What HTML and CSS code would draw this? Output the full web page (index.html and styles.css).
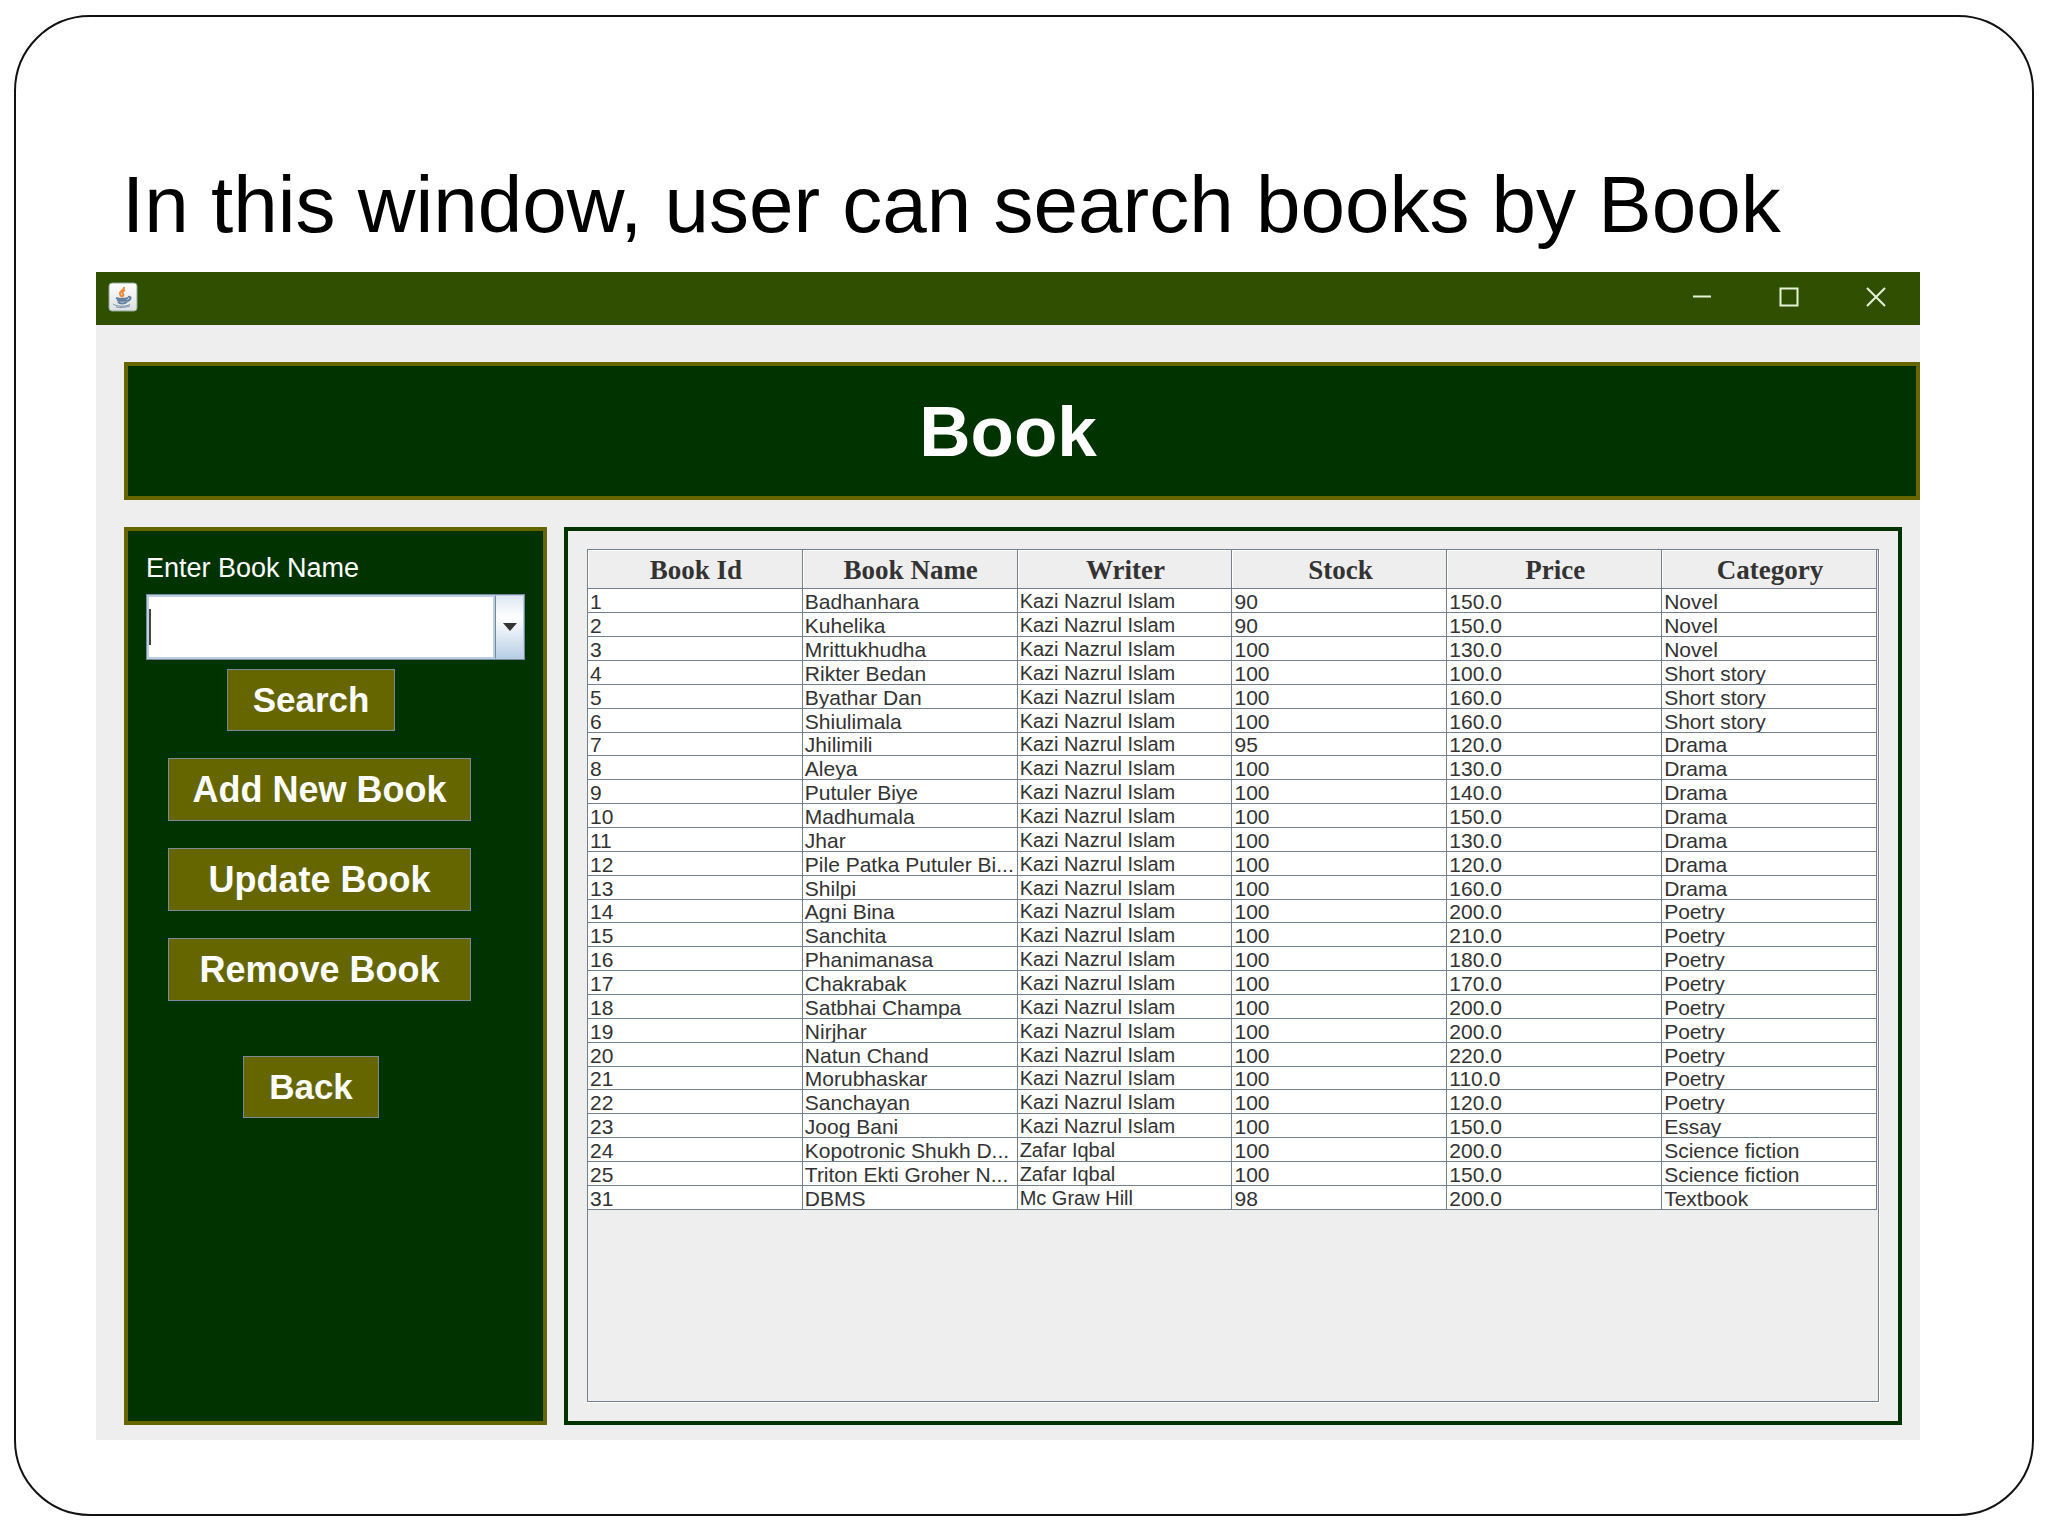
FILE: index.html
```html
<!DOCTYPE html>
<html lang="en">
<head>
<meta charset="utf-8">
<title>Book</title>
<link rel="stylesheet" href="styles.css">
</head>
<body>
<main class="slide">
  <h1 class="slide-title">In this window, user can search books by Book</h1>
  <section class="window">
    <header class="titlebar">
      <svg class="java-icon" width="30" height="30" viewBox="0 0 30 30" aria-hidden="true">
        <defs><linearGradient id="tile" x1="0" y1="0" x2="0" y2="1"><stop offset="0" stop-color="#ffffff"/><stop offset="1" stop-color="#dcdfe2"/></linearGradient></defs>
        <rect x="1" y="1" width="28" height="28" rx="3" fill="url(#tile)" stroke="#8fa79a"/>
        <path d="M16 5c1 3-5 4-4 7 0 1 1 2 2 3M17 8c-3 2-3 3-2 4s0 2-1 3" fill="none" stroke="#ec8a3c" stroke-width="2"/>
        <path d="M8 16c3 1 9 1 12 0M9 18c3 1 7 1 10 0M10 20c2 2 6 2 9 0M20 15c4-1 3 3-1 4" fill="none" stroke="#5f7f9d" stroke-width="2"/>
        <path d="M5 22c4 3 15 3 17 0M8 25c5 1 11 0 14-1" fill="none" stroke="#7892aa" stroke-width="1"/>
      </svg>
      <div class="controls">
        <button class="control" type="button" aria-label="Minimize"><svg width="20" height="20" viewBox="0 0 20 20"><path d="M1 9.500h18"/></svg></button>
        <button class="control" type="button" aria-label="Maximize"><svg width="20" height="20" viewBox="0 0 20 20"><path d="M1.500 1.500h17v17h-17z"/></svg></button>
        <button class="control" type="button" aria-label="Close"><svg width="20" height="20" viewBox="0 0 20 20"><path d="M1 1l18 18M19 1L1 19"/></svg></button>
      </div>
    </header>
    <div class="content">
      <h2 class="banner">Book</h2>
      <div class="columns">
        <form class="sidebar">
          <label class="label" for="book-name">Enter Book Name</label>
          <div class="combo">
            <span class="caret"></span>
            <input class="combo-input" id="book-name" type="text">
            <button class="combo-arrow" type="button" aria-label="Show book names"><svg width="14" height="8" viewBox="0 0 14 8"><path d="M0 0h14L7 8z" fill="#333"/></svg></button>
          </div>
          <div class="actions">
            <button class="action" type="button">Search</button>
            <button class="action wide" type="button">Add New Book</button>
            <button class="action wide" type="button">Update Book</button>
            <button class="action wide" type="button">Remove Book</button>
            <button class="action back" type="button">Back</button>
          </div>
        </form>
        <section class="results">
          <div class="scroll">
            <table class="books">
              <thead><tr><th>Book Id</th><th>Book Name</th><th>Writer</th><th>Stock</th><th>Price</th><th>Category</th></tr></thead>
              <tbody>
<tr><td>1</td><td>Badhanhara</td><td>Kazi Nazrul Islam</td><td>90</td><td>150.0</td><td>Novel</td></tr>
<tr><td>2</td><td>Kuhelika</td><td>Kazi Nazrul Islam</td><td>90</td><td>150.0</td><td>Novel</td></tr>
<tr><td>3</td><td>Mrittukhudha</td><td>Kazi Nazrul Islam</td><td>100</td><td>130.0</td><td>Novel</td></tr>
<tr><td>4</td><td>Rikter Bedan</td><td>Kazi Nazrul Islam</td><td>100</td><td>100.0</td><td>Short story</td></tr>
<tr><td>5</td><td>Byathar Dan</td><td>Kazi Nazrul Islam</td><td>100</td><td>160.0</td><td>Short story</td></tr>
<tr><td>6</td><td>Shiulimala</td><td>Kazi Nazrul Islam</td><td>100</td><td>160.0</td><td>Short story</td></tr>
<tr><td>7</td><td>Jhilimili</td><td>Kazi Nazrul Islam</td><td>95</td><td>120.0</td><td>Drama</td></tr>
<tr><td>8</td><td>Aleya</td><td>Kazi Nazrul Islam</td><td>100</td><td>130.0</td><td>Drama</td></tr>
<tr><td>9</td><td>Putuler Biye</td><td>Kazi Nazrul Islam</td><td>100</td><td>140.0</td><td>Drama</td></tr>
<tr><td>10</td><td>Madhumala</td><td>Kazi Nazrul Islam</td><td>100</td><td>150.0</td><td>Drama</td></tr>
<tr><td>11</td><td>Jhar</td><td>Kazi Nazrul Islam</td><td>100</td><td>130.0</td><td>Drama</td></tr>
<tr><td>12</td><td>Pile Patka Putuler Bi...</td><td>Kazi Nazrul Islam</td><td>100</td><td>120.0</td><td>Drama</td></tr>
<tr><td>13</td><td>Shilpi</td><td>Kazi Nazrul Islam</td><td>100</td><td>160.0</td><td>Drama</td></tr>
<tr><td>14</td><td>Agni Bina</td><td>Kazi Nazrul Islam</td><td>100</td><td>200.0</td><td>Poetry</td></tr>
<tr><td>15</td><td>Sanchita</td><td>Kazi Nazrul Islam</td><td>100</td><td>210.0</td><td>Poetry</td></tr>
<tr><td>16</td><td>Phanimanasa</td><td>Kazi Nazrul Islam</td><td>100</td><td>180.0</td><td>Poetry</td></tr>
<tr><td>17</td><td>Chakrabak</td><td>Kazi Nazrul Islam</td><td>100</td><td>170.0</td><td>Poetry</td></tr>
<tr><td>18</td><td>Satbhai Champa</td><td>Kazi Nazrul Islam</td><td>100</td><td>200.0</td><td>Poetry</td></tr>
<tr><td>19</td><td>Nirjhar</td><td>Kazi Nazrul Islam</td><td>100</td><td>200.0</td><td>Poetry</td></tr>
<tr><td>20</td><td>Natun Chand</td><td>Kazi Nazrul Islam</td><td>100</td><td>220.0</td><td>Poetry</td></tr>
<tr><td>21</td><td>Morubhaskar</td><td>Kazi Nazrul Islam</td><td>100</td><td>110.0</td><td>Poetry</td></tr>
<tr><td>22</td><td>Sanchayan</td><td>Kazi Nazrul Islam</td><td>100</td><td>120.0</td><td>Poetry</td></tr>
<tr><td>23</td><td>Joog Bani</td><td>Kazi Nazrul Islam</td><td>100</td><td>150.0</td><td>Essay</td></tr>
<tr><td>24</td><td>Kopotronic Shukh D...</td><td>Zafar Iqbal</td><td>100</td><td>200.0</td><td>Science fiction</td></tr>
<tr><td>25</td><td>Triton Ekti Groher N...</td><td>Zafar Iqbal</td><td>100</td><td>150.0</td><td>Science fiction</td></tr>
<tr><td>31</td><td>DBMS</td><td>Mc Graw Hill</td><td>98</td><td>200.0</td><td>Textbook</td></tr>
              </tbody>
            </table>
          </div>
        </section>
      </div>
    </div>
  </section>
</main>
</body>
</html>
```

FILE: styles.css
```css
* { box-sizing: border-box; }

body {
  margin: 0;
  display: flow-root;
  background: #fff;
  font-family: "Liberation Sans", Arial, sans-serif;
}

button { font-family: inherit; cursor: pointer; }

.slide {
  display: flex;
  flex-direction: column;
  min-height: calc(100vh - 35px);
  margin: 15px 14px 20px;
  padding: 143px 112px 74px 80px;
  border: 2px solid #111;
  border-radius: 76px;
}

.slide-title {
  margin: 0 0 22px;
  padding-left: 26px;
  font-size: 80px;
  line-height: 90px;
  font-weight: 400;
  color: #000;
}

.window {
  flex: 1;
  display: flex;
  flex-direction: column;
  background: #eee;
}

.titlebar {
  display: flex;
  align-items: center;
  justify-content: space-between;
  height: 53px;
  padding: 0 1px 4px 12px;
  background: #305000;
}

.controls { display: flex; }

.control {
  display: flex;
  align-items: center;
  justify-content: center;
  width: 87px;
  height: 49px;
  padding: 0;
  border: 0;
  background: none;
}

.control svg { fill: none; stroke: #e6f2d8; stroke-width: 2; }

.content {
  flex: 1;
  display: flex;
  flex-direction: column;
  gap: 27px;
  padding: 37px 0 15px 28px;
}

.banner {
  margin: 0;
  padding: 2px 28px 0 0;
  border: 4px solid #660;
  background: #030;
  color: #fff;
  font-size: 71px;
  line-height: 128px;
  text-align: center;
}

.columns {
  flex: 1;
  display: flex;
  gap: 17px;
  padding-right: 18px;
}

.sidebar {
  flex: 0 0 423px;
  min-width: 0;
  padding: 20px 18px;
  border: 4px solid #660;
  background: #030;
}

.label {
  display: block;
  height: 43px;
  color: #fff;
  font-size: 27px;
  line-height: 34px;
}

.combo {
  position: relative;
  display: flex;
  height: 66px;
  border: 1px solid #7a8a99;
}

.combo-input {
  flex: 1;
  min-width: 0;
  padding: 0 8px;
  border: 2px solid #b8cfe5;
  background: #fff;
  font: 27px "Liberation Sans", Arial, sans-serif;
  outline: 0;
}

.caret {
  position: absolute;
  left: 2px;
  top: 14px;
  width: 2px;
  height: 36px;
  background: #444;
}

.combo-arrow {
  display: flex;
  align-items: center;
  justify-content: center;
  width: 29px;
  padding: 0;
  border: 1px solid #b8cfe5;
  border-left: 1px solid #7a8a99;
  background: linear-gradient(#dde8f3, #fff 35%, #b8cfe5);
}

.actions {
  display: flex;
  flex-direction: column;
  align-items: center;
  gap: 27px;
  margin-top: 9px;
  padding-right: 49px;
}

.action {
  height: 62px;
  padding: 0 25px;
  border: 1px solid #7a8a99;
  background: #660;
  color: #fff;
  font-size: 35px;
  font-weight: 700;
  line-height: 60px;
}

/* Wide buttons run past the centre line of the short ones. */
.wide {
  width: 303px;
  height: 63px;
  margin-right: -17px;
  padding: 0;
  font-size: 36px;
}

.back { margin-top: 28px; }

.results {
  flex: 1;
  display: flex;
  min-width: 0;
  padding: 18px 19px 19px;
  border: 4px solid #030;
}

.scroll {
  flex: 1;
  min-width: 0;
  border: 1px solid #728090;
  box-shadow: 1px 1px 0 #fff;
}

.books {
  width: calc(100% - 1px);
  table-layout: fixed;
  border-collapse: separate;
  border-spacing: 0;
  color: #333;
}

.books th,
.books td {
  border-right: 1px solid #728090;
  border-bottom: 1px solid #728090;
  white-space: nowrap;
  overflow: hidden;
}

.books th {
  height: 39px;
  padding: 1px 0 0 2px;
  box-shadow: inset 1px 1px 0 #fff;
  font-family: "Liberation Serif", "Times New Roman", serif;
  font-size: 27px;
  line-height: 36px;
}

.books td {
  padding: 2px 0 0 2px;
  background: #fff;
  font-size: 21px;
  line-height: 21px;
}

.books td:nth-child(3) { font-size: 20px; }

.books tbody tr:nth-child(7n) td { padding-top: 1px; }
```
